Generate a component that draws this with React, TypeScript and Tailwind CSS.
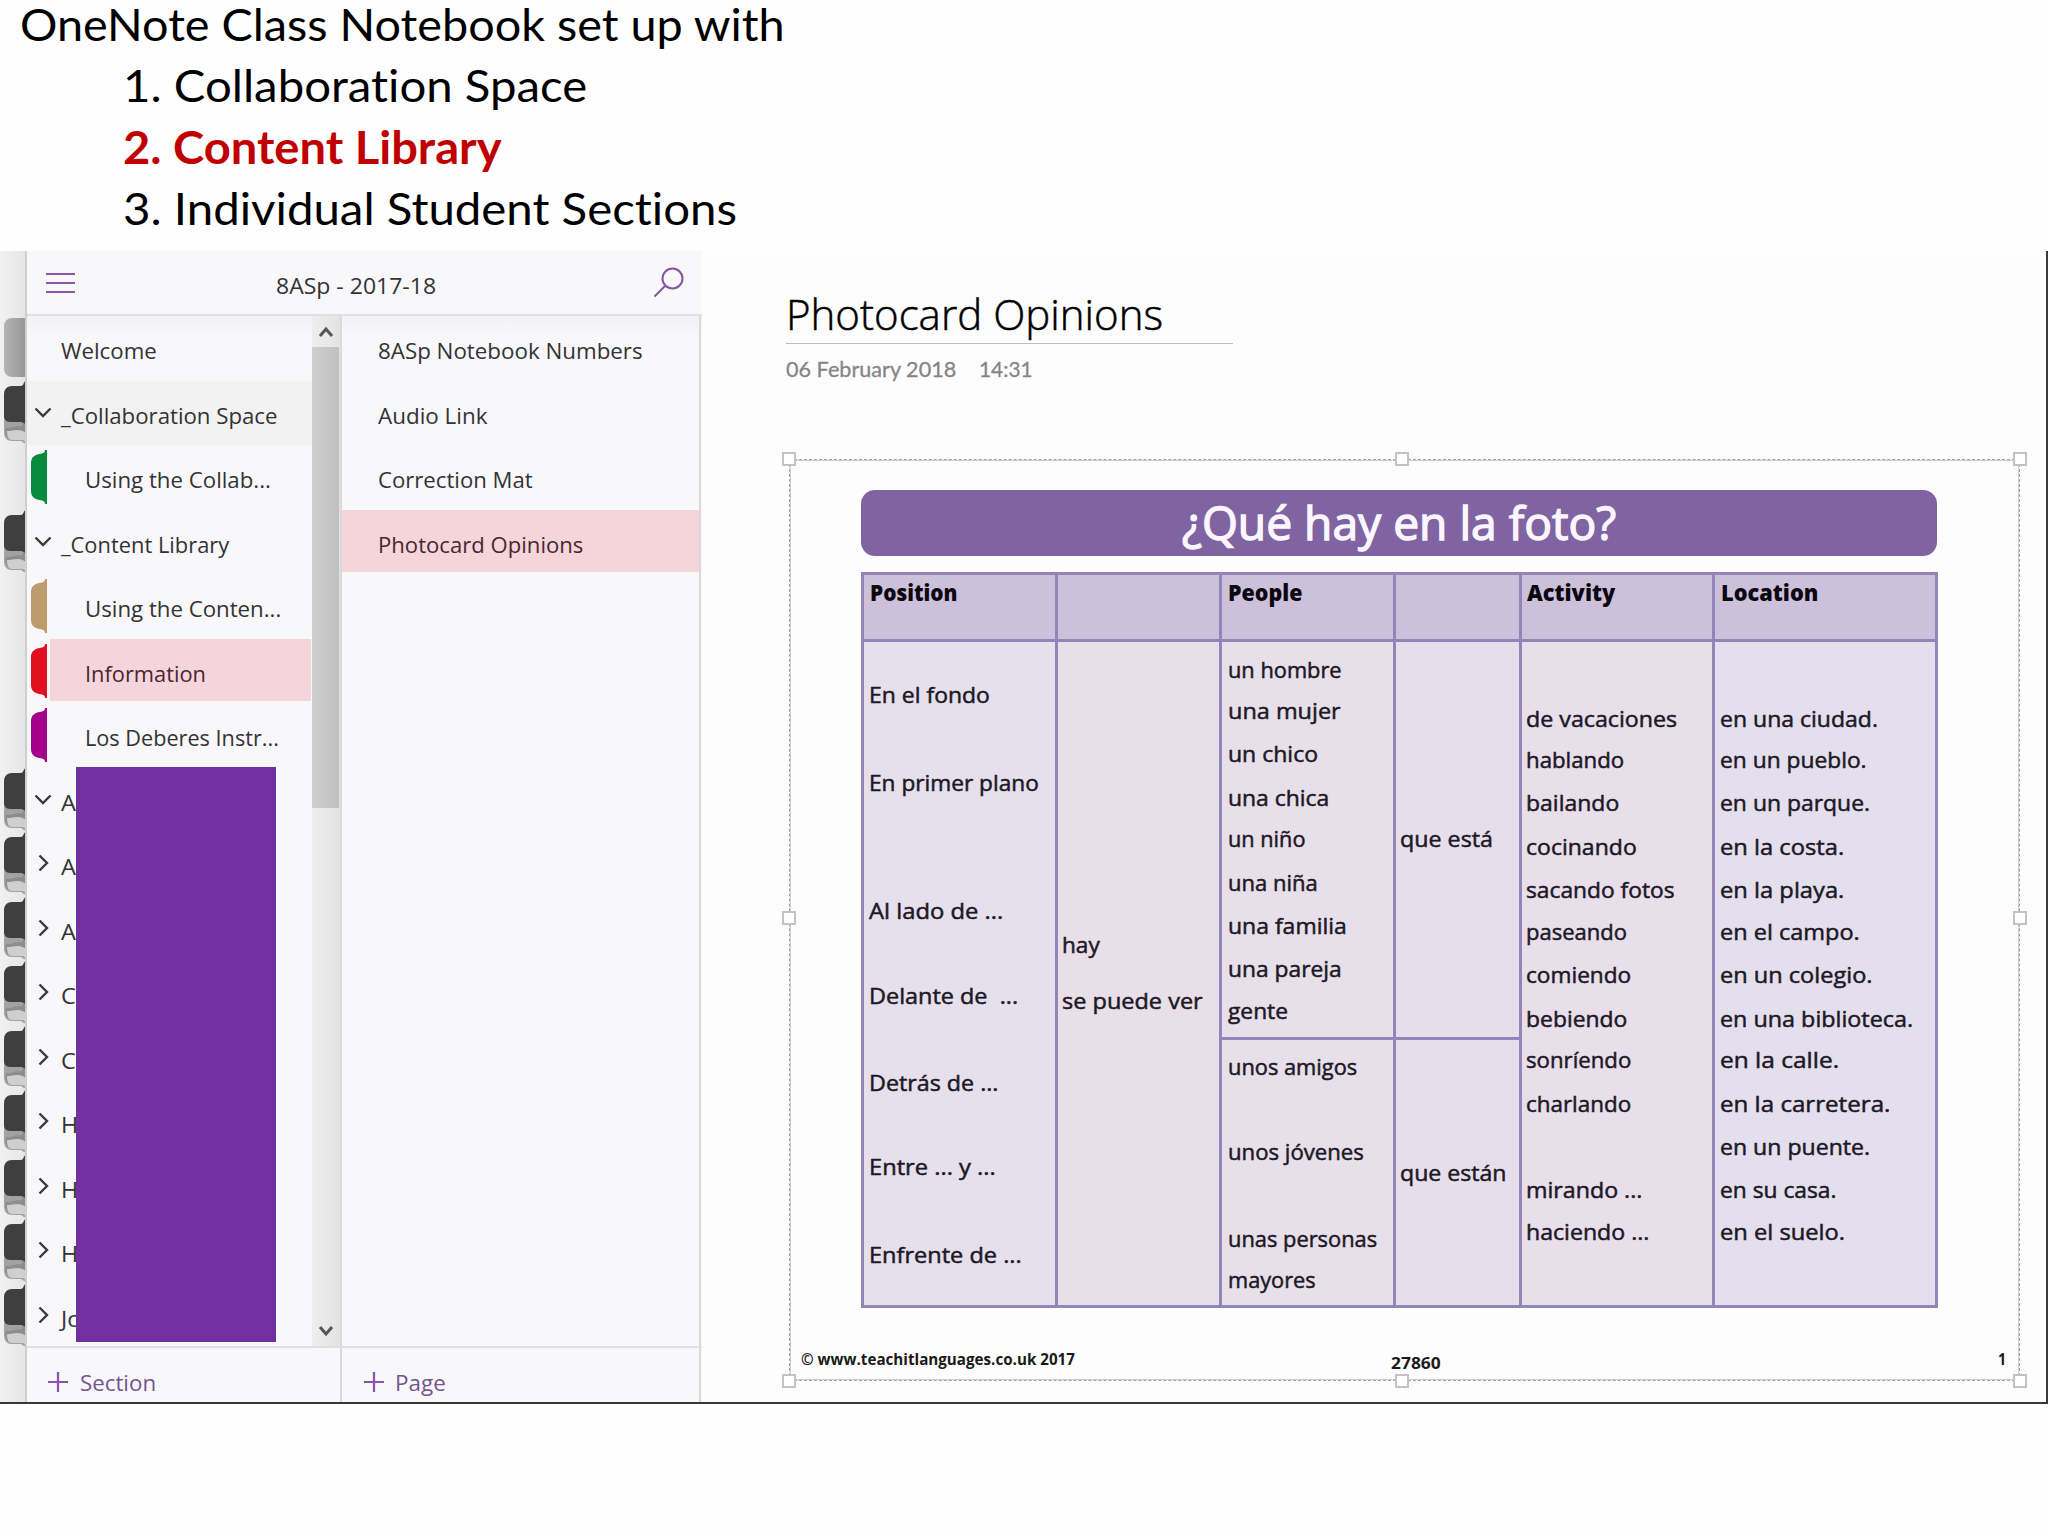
import React, { useLayoutEffect, useRef, useState } from 'react';

interface FitTextProps {
  text: string;
  width: number;
  className?: string;
}

// Squeezes or stretches a single line so that it fills the given width
const FitText: React.FC<FitTextProps> = ({ text, width, className = '' }) => {
  const ref = useRef<HTMLSpanElement>(null);
  const [scale, setScale] = useState(1);

  useLayoutEffect(() => {
    if (ref.current) {
      setScale(width / ref.current.offsetWidth);
    }
  }, [text, width]);

  return (
    <span className="block" style={{ width }}>
      <span
        ref={ref}
        className={`inline-block origin-left whitespace-pre ${className}`}
        style={{ transform: `scaleX(${scale})` }}
      >
        {text}
      </span>
    </span>
  );
};

// [text, width, baseline]
type Line = [string, number, number];

interface SectionRow {
  label: string;
  width: number;
  kind: 'page' | 'open' | 'closed' | 'section';
  color?: string;
  selected?: boolean;
  hovered?: boolean;
}

const sections: SectionRow[] = [
  { label: 'Welcome', width: 96, kind: 'page' },
  { label: '_Collaboration Space', width: 216, kind: 'open', hovered: true },
  { label: 'Using the Collab...', width: 186, kind: 'section', color: '#078a3c' },
  { label: '_Content Library', width: 168, kind: 'open' },
  { label: 'Using the Conten...', width: 196, kind: 'section', color: '#bd9b6c' },
  { label: 'Information', width: 121, kind: 'section', color: '#e01020', selected: true },
  { label: 'Los Deberes Instr...', width: 194, kind: 'section', color: '#a5008c' },
  { label: 'A', width: 15, kind: 'open' },
  { label: 'A', width: 15, kind: 'closed' },
  { label: 'A', width: 15, kind: 'closed' },
  { label: 'C', width: 15, kind: 'closed' },
  { label: 'C', width: 15, kind: 'closed' },
  { label: 'H', width: 17, kind: 'closed' },
  { label: 'H', width: 17, kind: 'closed' },
  { label: 'H', width: 17, kind: 'closed' },
  { label: 'Jo', width: 20, kind: 'closed' },
];

const pages = [
  { label: '8ASp Notebook Numbers', width: 265 },
  { label: 'Audio Link', width: 109 },
  { label: 'Correction Mat', width: 155 },
  { label: 'Photocard Opinions', width: 205, selected: true },
];

const positions: Line[] = [
  ['En el fondo', 121, 703],
  ['En primer plano', 170, 791],
  ['Al lado de ...', 134, 919],
  ['Delante de  ...', 149, 1004],
  ['Detrás de ...', 129, 1091],
  ['Entre ... y ...', 127, 1175],
  ['Enfrente de ...', 153, 1263],
];

const verbs: Line[] = [
  ['hay', 38, 953],
  ['se puede ver', 141, 1009],
];

const people: Line[] = [
  ['un hombre', 114, 678],
  ['una mujer', 113, 719],
  ['un chico', 90, 762],
  ['una chica', 101, 806],
  ['un niño', 77, 847],
  ['una niña', 90, 891],
  ['una familia', 119, 934],
  ['una pareja', 114, 977],
  ['gente', 60, 1019],
];

const groups: Line[] = [
  ['unos amigos', 129, 1075],
  ['unos jóvenes', 136, 1160],
  ['unas personas', 149, 1247],
  ['mayores', 88, 1288],
];

const activities: Line[] = [
  ['de vacaciones', 151, 727],
  ['hablando', 98, 768],
  ['bailando', 93, 811],
  ['cocinando', 111, 855],
  ['sacando fotos', 149, 898],
  ['paseando', 101, 940],
  ['comiendo', 105, 983],
  ['bebiendo', 101, 1027],
  ['sonríendo', 105, 1068],
  ['charlando', 105, 1112],
  ['mirando ...', 116, 1198],
  ['haciendo ...', 123, 1240],
];

const locations: Line[] = [
  ['en una ciudad.', 158, 727],
  ['en un pueblo.', 147, 768],
  ['en un parque.', 150, 811],
  ['en la costa.', 124, 855],
  ['en la playa.', 124, 898],
  ['en el campo.', 140, 940],
  ['en un colegio.', 152, 983],
  ['en una biblioteca.', 193, 1027],
  ['en la calle.', 119, 1068],
  ['en la carretera.', 170, 1112],
  ['en un puente.', 150, 1155],
  ['en su casa.', 117, 1198],
  ['en el suelo.', 125, 1240],
];

const TOP_ROW = 643;
const LOWER_ROW = 1041;

const Lines: React.FC<{ lines: Line[]; top: number }> = ({ lines, top }) => (
  <div className="flex flex-col text-[22px] leading-[22px] text-[#1d1826] [-webkit-text-stroke:0.5px_#1d1826]">
    {lines.map(([text, width, baseline], i) => (
      <div
        key={text}
        className="flex items-end"
        style={{ height: i === 0 ? baseline + 3 - top : baseline - lines[i - 1][2] }}
      >
        <FitText text={text} width={width} />
      </div>
    ))}
  </div>
);

const HeadCell: React.FC<{ text?: string; width?: number; className?: string }> = ({
  text,
  width = 0,
  className = 'pl-1.5',
}) => (
  <div className={`bg-[#cdc0db] pt-[6px] text-[22px] leading-[22px] font-extrabold text-[#0b0810] ${className}`}>
    {text && <FitText text={text} width={width} />}
  </div>
);

const ChevronDown = () => (
  <svg className="mt-[26px] ml-[7px] h-[11px] w-[18px]" viewBox="0 0 18 11" fill="none">
    <path d="M1.500 1.500 9 9l7.500-7.500" stroke="#3a3a3a" strokeWidth="2.400" />
  </svg>
);

const ChevronRight = () => (
  <svg className="mt-[22px] ml-[11px] h-[18px] w-[11px]" viewBox="0 0 11 18" fill="none">
    <path d="M1.500 1.500 9 9l-7.500 7.500" stroke="#3a3a3a" strokeWidth="2.400" />
  </svg>
);

const SectionTab: React.FC<{ color: string }> = ({ color }) => (
  <svg className="mt-[5px] ml-1 h-[54px] w-4" viewBox="0 0 16 54">
    <path d="M16 0h-2c0 2-1 3-3 3.500C4 4.500 0 7 0 13v28c0 6 4 8.500 11 9.500 2 .5 3 1.500 3 3.500h2z" fill={color} />
  </svg>
);

const NotebookTab = () => (
  <svg className="block h-[64.500px] w-[22px]" viewBox="0 0 22 64.500">
    <path d="M22 2v60c-1.500 1-3-1-5-2H8c-5 0-8-3-8-9V14c0-6 3-9 9-9h8c2 0 2-3 5-3z" fill="#a2a2a2" />
    <path d="M22 40v20c-1.500 1-3-1.500-5-1.500H9c-5 0-7.500-3-7.500-8l.5-4c5 2 9-2 14-1 3 0 3-4 6-5.500z" fill="#8d8d8d" />
    <path d="M22 52v9c-2-1.500-3-2-5-2H9c-4 0-6-2-6-9 5 0 10-2 14-.500 2 .5 3 1.500 5 2.500z" fill="#cfcfcf" />
    <path d="M22 0v43c-2 0-3-2-5-2H6c-4 0-6-3-6-6V14c0-6 3-9 9-9h8c3 0 2-4 5-5z" fill="#3f3f3f" />
  </svg>
);

const Sidebar = () => (
  <div className="flex h-[1151px] w-[702px] bg-[#f8f7f9]">
    <div className="flex w-[27px] flex-col border-r-2 border-[#cfcfcf] bg-linear-to-r from-[#f1f1f1] to-[#e6e6e6] pt-[65px] pl-1">
      {sections.map((s, i) => (
        <div key={i} className="h-[64.500px] shrink-0 overflow-hidden">
          {i === 0 && (
            <div className="mt-0.5 h-[59px] rounded-l-[8px] bg-linear-to-r from-[#b4b4b4] to-[#979797]" />
          )}
          {i > 0 && s.kind !== 'section' && <NotebookTab />}
        </div>
      ))}
    </div>

    <div className="flex w-[675px] flex-col">
      <div className="flex h-[65px] shrink-0 border-b-2 border-[#e2e0e3]">
        <svg className="mt-[21px] ml-[19px] h-[22px] w-[30px]" viewBox="0 0 30 22">
          <path d="M0 2h29M0 11h29M0 20h29" stroke="#8b56a8" strokeWidth="2.200" />
        </svg>
        <div className="mt-[14px] ml-[200px] text-[22px] leading-[40px] text-[#333]">
          <FitText text="8ASp - 2017-18" width={160} />
        </div>
        <svg className="mt-[15px] ml-[217px] h-8 w-8" viewBox="0 0 32 32" fill="none">
          <circle cx="19.500" cy="12.500" r="10" stroke="#8257a0" strokeWidth="2" />
          <path d="M12 20 1.500 30.500" stroke="#8257a0" strokeWidth="2" />
        </svg>
      </div>

      <div className="flex min-h-0 flex-1 bg-linear-to-b from-[#f2f1f3] from-0% to-[#f8f7f9] to-[2%]">
        <div className="relative w-[285px]">
          <div className="h-[1030px] overflow-hidden">
            {sections.map((s, i) => (
              <div key={i} className={`flex h-[64.500px] ${s.hovered ? 'bg-[#f2f2f2]' : ''}`}>
                <div className="w-[34px] shrink-0">
                  {s.kind === 'open' && <ChevronDown />}
                  {s.kind === 'closed' && <ChevronRight />}
                  {s.color && <SectionTab color={s.color} />}
                </div>
                {s.kind === 'section' ? (
                  <div
                    className={`-ml-[11px] mb-0.5 w-[261px] pl-[35px] text-[22px] leading-[69px] ${
                      s.selected ? 'bg-[#f5d5db] text-[#4a2630]' : 'text-[#333]'
                    }`}
                  >
                    <FitText text={s.label} width={s.width} />
                  </div>
                ) : (
                  <div className="text-[22px] leading-[69px] text-[#333]">
                    <FitText text={s.label} width={s.width} />
                  </div>
                )}
              </div>
            ))}
          </div>
          <div className="absolute top-[451px] left-[49px] h-[575px] w-[200px] bg-[#7330a0]" />
        </div>

        <div className="flex h-[1030px] w-[28px] flex-col bg-linear-to-r from-[#efeeef] to-[#e4e3e4]">
          <svg className="mt-[10px] ml-1.5 h-3 w-4" viewBox="0 0 16 12" fill="none">
            <path d="m2 10 6-7 6 7" stroke="#555" strokeWidth="3" />
          </svg>
          <div className="mt-[9px] h-[461px] w-[27px] bg-linear-to-r from-[#cfcfcf] to-[#c0c0c0]" />
          <svg className="mt-auto mb-[9px] ml-1.5 h-3 w-4" viewBox="0 0 16 12" fill="none">
            <path d="m2 2 6 7 6-7" stroke="#555" strokeWidth="3" />
          </svg>
        </div>

        <div className="w-[361px] border-x-2 border-[#d9d8da]">
          {pages.map((p) => (
            <div
              key={p.label}
              className={`mb-0.5 h-[62.500px] pl-9 text-[22px] leading-[69px] ${
                p.selected ? 'bg-[#f5d5da] text-[#4a2630]' : 'text-[#333]'
              }`}
            >
              <FitText text={p.label} width={p.width} />
            </div>
          ))}
        </div>
      </div>

      <div className="flex h-[56px] shrink-0 border-t-2 border-[#dfdee0] text-[22px] leading-[68px] text-[#76558f]">
        <div className="flex w-[313px]">
          <svg className="mt-[24px] ml-[21px] h-5 w-5" viewBox="0 0 20 20">
            <path d="M10 0v20M0 10h20" stroke="#8455a8" strokeWidth="2.200" />
          </svg>
          <div className="ml-[12px]">
            <FitText text="Section" width={76} />
          </div>
        </div>
        <div className="flex w-[361px] border-x-2 border-[#d9d8da]">
          <svg className="mt-[24px] ml-[22px] h-5 w-5" viewBox="0 0 20 20">
            <path d="M10 0v20M0 10h20" stroke="#8455a8" strokeWidth="2.200" />
          </svg>
          <div className="ml-[11px]">
            <FitText text="Page" width={51} />
          </div>
        </div>
      </div>
    </div>
  </div>
);

const Handle: React.FC<{ className: string }> = ({ className }) => (
  <span className={`absolute h-[14px] w-[14px] border-2 border-[#c4c2c5] bg-white ${className}`} />
);

const VocabTable = () => (
  <div className="grid h-[736px] w-[1077px] grid-cols-[191px_161px_171px_123px_190px_220px] grid-rows-[64px_395px_265px] gap-[3px] bg-[#9385b8] p-[3px]">
    <HeadCell text="Position" width={87} />
    <HeadCell />
    <HeadCell text="People" width={74} />
    <HeadCell />
    <HeadCell text="Activity" width={88} className="pl-[5px]" />
    <HeadCell text="Location" width={97} />

    <div className="row-span-2 bg-[#e5e0ec] pl-[5px]">
      <Lines lines={positions} top={TOP_ROW} />
    </div>
    <div className="row-span-2 bg-[#e8dfe9] pl-1">
      <Lines lines={verbs} top={TOP_ROW} />
    </div>
    <div className="bg-[#e7dfe9] pl-1.5">
      <Lines lines={people} top={TOP_ROW} />
    </div>
    <div className="bg-[#e6dfeb] pl-1">
      <Lines lines={[['que está', 93, 847]]} top={TOP_ROW} />
    </div>
    <div className="row-span-2 bg-[#e8dfeb] pl-1">
      <Lines lines={activities} top={TOP_ROW} />
    </div>
    <div className="row-span-2 bg-[#e4dfec] pl-[5px]">
      <Lines lines={locations} top={TOP_ROW} />
    </div>
    <div className="bg-[#e7dfe9] pl-1.5">
      <Lines lines={groups} top={LOWER_ROW} />
    </div>
    <div className="bg-[#e6dfeb] pl-1">
      <Lines lines={[['que están', 106, 1181]]} top={LOWER_ROW} />
    </div>
  </div>
);

const NotePage = () => (
  <div className="flex h-[1151px] w-[1346px] flex-col border-r-2 border-[#3a3a3e] bg-[#fefdfe] pl-[84px]">
    <div className="h-[93px] w-[447px] border-b border-[#bdbbc0] pt-[35px] text-[42px] leading-[56px] font-light text-black [-webkit-text-stroke:0.5px_#000]">
      <FitText text="Photocard Opinions" width={377} />
    </div>
    <div className="flex h-[115px] gap-[23px] pt-[5px] font-['Lato','Open_Sans',sans-serif] text-[22px] leading-[40px] text-[#858585] [-webkit-text-stroke:0.3px_#858585]">
      <FitText text="06 February 2018" width={170} />
      <FitText text="14:31" width={54} />
    </div>

    <div className="relative ml-[3px] h-[922px] w-[1231px] border border-dashed border-[#a0a0a0]">
      <div className="flex h-full flex-col border border-[#cfcdd0] pt-[29px]">
        <div className="ml-[70px] flex h-[66px] w-[1076px] justify-center rounded-[14px] bg-[#8064a1] text-[45px] leading-[65px] text-[#fbf6ff] [-webkit-text-stroke:1.3px_#fbf6ff]">
          <FitText text="¿Qué hay en la foto?" width={434} />
        </div>
        <div className="mt-4 ml-[70px]">
          <VocabTable />
        </div>
        <div className="flex pt-[39px] pl-[10px] text-[16px] leading-6 font-bold text-[#1a1a1a]">
          <FitText text="© www.teachitlanguages.co.uk 2017" width={274} />
          <div className="mt-1 ml-[316px]">
            <FitText text="27860" width={50} />
          </div>
          <div className="ml-[557px]">
            <FitText text="1" width={8} />
          </div>
        </div>
      </div>
      <Handle className="-top-2 -left-2" />
      <Handle className="-top-2 left-[605px]" />
      <Handle className="-top-2 -right-2" />
      <Handle className="top-[451px] -left-2" />
      <Handle className="top-[451px] -right-2" />
      <Handle className="-bottom-2 -left-2" />
      <Handle className="-bottom-2 left-[605px]" />
      <Handle className="-right-2 -bottom-2" />
    </div>
  </div>
);

export default function App() {
  return (
    <div className="h-[1536px] w-[2048px] bg-[#fefefe] font-['Open_Sans','Noto_Sans',sans-serif]">
      <div className="flex h-[251px] flex-col font-['Lato',sans-serif] text-[45px] leading-[61.500px] text-black [font-variant-ligatures:none]">
        <div className="mb-[7px] pl-5 leading-[48px]">
          <FitText text="OneNote Class Notebook set up with" width={765} />
        </div>
        <div className="pl-[123px]">
          <FitText text="1. Collaboration Space" width={464} />
        </div>
        <div className="pl-[123px] font-bold text-[#c00000]">
          <FitText text="2. Content Library" width={378} />
        </div>
        <div className="pl-[123px]">
          <FitText text="3. Individual Student Sections" width={614} />
        </div>
      </div>

      <div className="flex h-[1153px] border-b-2 border-[#38363a]">
        <Sidebar />
        <NotePage />
      </div>
    </div>
  );
}
